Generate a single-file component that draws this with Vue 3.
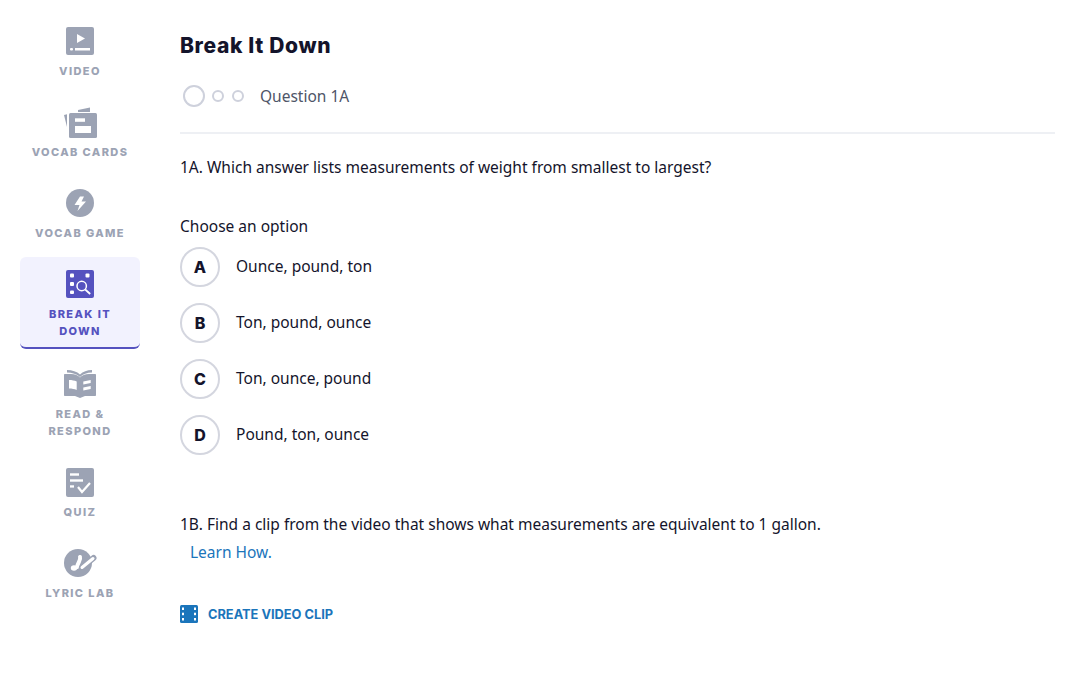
<script setup>
const navItems = [
  { key: 'video', label: 'VIDEO' },
  { key: 'cards', label: 'VOCAB CARDS' },
  { key: 'game', label: 'VOCAB GAME' },
  { key: 'break', label: 'BREAK IT DOWN', active: true },
  { key: 'read', label: 'READ & RESPOND' },
  { key: 'quiz', label: 'QUIZ' },
  { key: 'lyric', label: 'LYRIC LAB' },
]

const options = [
  { letter: 'A', text: 'Ounce, pound, ton' },
  { letter: 'B', text: 'Ton, pound, ounce' },
  { letter: 'C', text: 'Ton, ounce, pound' },
  { letter: 'D', text: 'Pound, ton, ounce' },
]
</script>

<template>
  <div class="page">
    <nav class="sidebar">
      <a v-for="item in navItems" :key="item.key" class="nav-item" :class="{ active: item.active }">
        <svg class="nav-icon" viewBox="0 0 32 30" width="32" height="30">
          <template v-if="item.key === 'video'">
            <rect x="2" y="1" width="28" height="28" rx="2" fill="currentColor" />
            <path d="M13 8l8 4.500-8 4.500z" fill="#fff" />
            <rect x="6" y="22" width="3" height="2.500" rx="1" fill="#fff" />
            <rect x="11" y="22" width="15" height="2.500" fill="#fff" />
          </template>
          <template v-else-if="item.key === 'cards'">
            <path d="M0 8l3-.7V20z" fill="currentColor" />
            <path d="M14 3l12-2.500V5H14z" fill="currentColor" />
            <rect x="5" y="6" width="28" height="25" rx="1.500" fill="currentColor" />
            <rect x="11" y="11.300" width="10" height="3.500" fill="#fff" />
            <rect x="11" y="19" width="16" height="7" fill="#fff" />
          </template>
          <template v-else-if="item.key === 'game'">
            <circle cx="16" cy="15" r="14" fill="currentColor" />
            <path d="M16 8.500h4l-2.500 5H22L13.500 23l2-6H10.500z" fill="#fff" />
          </template>
          <template v-else-if="item.key === 'break'">
            <rect x="2" y="1" width="28" height="28" rx="2" fill="currentColor" />
            <rect x="6" y="4.500" width="4" height="4" rx="1" fill="#fff" />
            <rect x="21.500" y="4.500" width="4" height="4" rx="1" fill="#fff" />
            <rect x="6" y="13" width="4" height="4" rx="1" fill="#fff" />
            <rect x="6" y="21.500" width="4" height="3.500" rx="1" fill="#fff" />
            <circle cx="17.700" cy="17" r="4.700" fill="none" stroke="#fff" stroke-width="1.500" />
            <path d="M21.200 20.500l5 4.500" fill="none" stroke="#fff" stroke-width="1.800" />
          </template>
          <template v-else-if="item.key === 'read'">
            <path d="M1 5h6c4 0 7 1.500 9 3.500 2-2 5-3.500 9-3.500h6c.6 0 1 .4 1 1v20c0 .6-.4 1-1 1H21l-5 2-5-2H1c-.6 0-1-.4-1-1V6c0-.6.4-1 1-1z" fill="currentColor" />
            <path d="M3 1c5 0 10 1.500 13 4.500C19 2.500 23 1 28 1v2.500c-5 0-9 1.500-12 4.500C13 5 8 3.500 3 3.500z" fill="currentColor" />
            <path d="M5 11c3 0 5.500.5 7.700 1.500V21c-2.200-1-4.700-1.500-7.700-1.500z" fill="#fff" />
            <path d="M19.300 12.500l7.400-1.500v3l-7.400 1.500zM19.300 18.500l7.400-1.500v3l-7.400 1.500z" fill="#fff" />
          </template>
          <template v-else-if="item.key === 'quiz'">
            <rect x="2" y="1" width="28" height="29" rx="2" fill="currentColor" />
            <rect x="6" y="6.300" width="9" height="2.400" fill="#fff" />
            <rect x="6" y="12.300" width="13" height="2.400" fill="#fff" />
            <rect x="6" y="18.300" width="4" height="2.300" fill="#fff" />
            <path d="M14 20l4 5 8-9" fill="none" stroke="#fff" stroke-width="2.200" />
          </template>
          <template v-else-if="item.key === 'lyric'">
            <circle cx="14" cy="15" r="14" fill="currentColor" />
            <path d="M16 9c1 3-2 5-3 10" fill="none" stroke="#fff" stroke-width="4" stroke-linecap="round" />
            <ellipse cx="10" cy="20" rx="3.200" ry="2.800" fill="#fff" />
            <path d="M18 19.500L29.500 10" fill="none" stroke="currentColor" stroke-width="6" stroke-linecap="round" />
            <path d="M18 19.500L29 10.500" fill="none" stroke="#fff" stroke-width="3" stroke-linecap="round" />
          </template>
        </svg>
        <span class="nav-label">{{ item.label }}</span>
      </a>
    </nav>

    <main class="content">
      <h1 class="title">Break It Down</h1>

      <div class="steps">
        <span class="dot big"></span>
        <span class="dot"></span>
        <span class="dot"></span>
        <span class="step-label">Question 1A</span>
      </div>

      <p class="question">1A. Which answer lists measurements of weight from smallest to largest?</p>

      <p class="choose">Choose an option</p>
      <div class="options">
        <div v-for="opt in options" :key="opt.letter" class="option">
          <span class="letter">{{ opt.letter }}</span>
          <span class="option-text">{{ opt.text }}</span>
        </div>
      </div>

      <p class="question-b">1B. Find a clip from the video that shows what measurements are equivalent to 1 gallon.</p>
      <a class="learn">Learn How.</a>

      <a class="create">
        <svg viewBox="0 0 18 18" width="18" height="18">
          <rect width="18" height="18" rx="1.500" fill="#1b75bb" />
          <g fill="#fff">
            <rect x="2" y="2.500" width="2" height="2.500" />
            <rect x="2" y="7.700" width="2" height="2.500" />
            <rect x="2" y="13" width="2" height="2.500" />
            <rect x="14" y="2.500" width="2" height="2.500" />
            <rect x="14" y="7.700" width="2" height="2.500" />
            <rect x="14" y="13" width="2" height="2.500" />
          </g>
        </svg>
        <span>CREATE VIDEO CLIP</span>
      </a>
    </main>
  </div>
</template>

<style>
body { background: #fff; }
</style>

<style scoped>
.page {
  display: flex;
  width: 1087px;
  height: 683px;
  overflow: hidden;
  background: #fff;
  font-family: "Noto Sans", "Open Sans", sans-serif;
  color: #14142b;
}
.sidebar {
  box-sizing: border-box;
  width: 180px;
  flex-shrink: 0;
  padding: 14px 40px 0 20px;
  display: flex;
  flex-direction: column;
  gap: 8px;
}
.nav-item {
  display: flex;
  flex-direction: column;
  align-items: center;
  padding: 12px 8px 8px;
  color: #9ca3b4;
  border-radius: 6px;
}
.nav-item.active {
  background: #f2f2fe;
  color: #5552bf;
  border-bottom: 2px solid #5552bf;
}
.nav-icon { display: block; overflow: visible; }
.nav-label {
  margin-top: 6.5px;
  margin-bottom: -0.5px;
  font-family: Inter, sans-serif;
  font-size: 11px;
  font-weight: 800;
  line-height: 17px;
  letter-spacing: 1.4px;
  text-align: center;
}
.content {
  flex: 1;
  min-width: 0;
  padding-right: 32px;
}
.title {
  margin: 33px 0 0;
  font-family: Inter, sans-serif;
  font-size: 21px;
  font-weight: 800;
  letter-spacing: 0.65px;
  line-height: 26px;
  color: #14142b;
}
.steps {
  display: flex;
  align-items: center;
  gap: 8px;
  height: 73px;
  padding-left: 3px;
  border-bottom: 2px solid #eef0f4;
}
.dot {
  box-sizing: border-box;
  width: 12px;
  height: 12px;
  border: 2px solid #ced1dc;
  border-radius: 50%;
}
.dot.big {
  width: 22px;
  height: 22px;
  margin-right: -1px;
}
.step-label {
  margin-left: 8px;
  font-size: 15.5px;
  color: #4e5568;
}
.question, .question-b, .choose {
  margin: 0;
  font-size: 15.5px;
  line-height: 24px;
  color: #14142b;
}
.question { margin-top: 21px; }
.choose { margin-top: 35px; }
.options {
  margin-top: 9px;
  display: flex;
  flex-direction: column;
  gap: 16px;
}
.option {
  display: flex;
  gap: 16px;
  height: 40px;
}
.letter {
  box-sizing: border-box;
  width: 40px;
  height: 40px;
  border: 2px solid #d4d6df;
  border-radius: 50%;
  display: flex;
  align-items: center;
  justify-content: center;
  font-family: Inter, sans-serif;
  font-size: 16px;
  font-weight: 800;
  color: #14142b;
}
.option-text {
  font-size: 15.5px;
  line-height: 38px;
}
.question-b { margin-top: 57px; }
.learn {
  display: block;
  margin: 4px 0 0 10px;
  font-size: 15.5px;
  line-height: 24px;
  color: #1b75bb;
}
.create {
  display: flex;
  align-items: center;
  gap: 10px;
  margin-top: 41px;
  font-family: Inter, sans-serif;
  font-size: 12.8px;
  font-weight: 700;
  color: #1b75bb;
}
</style>
